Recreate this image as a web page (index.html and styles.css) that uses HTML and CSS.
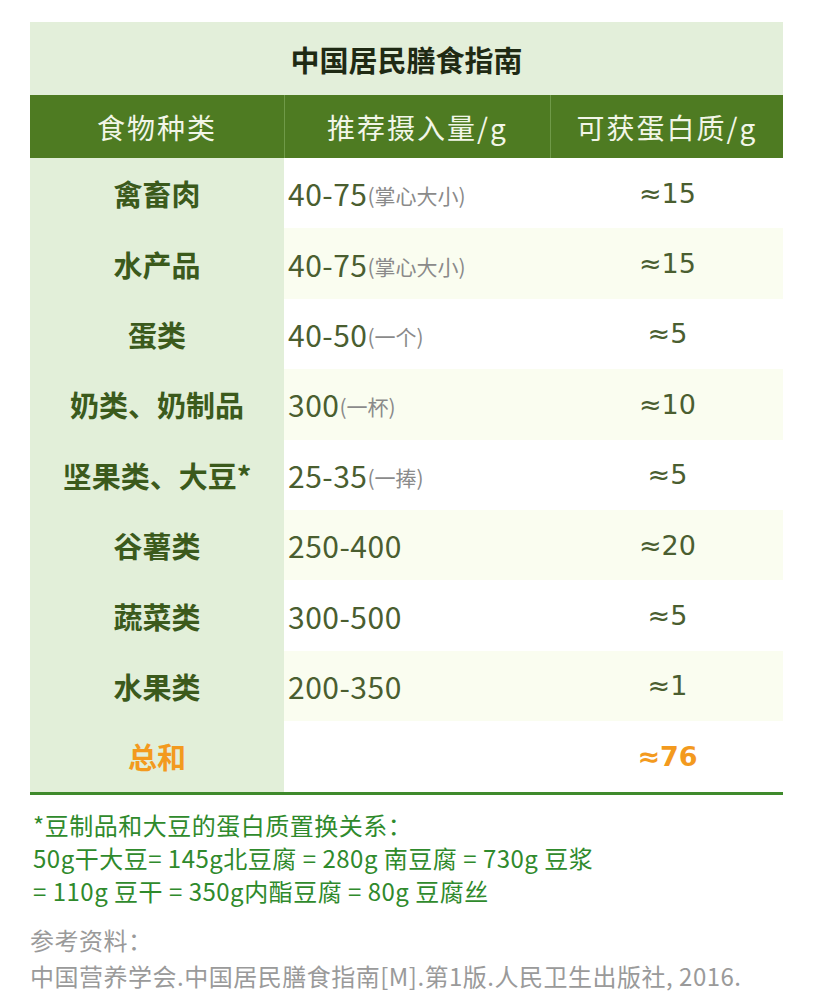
FILE: index.html
```html
<!DOCTYPE html>
<html lang="zh-CN">
<head>
<meta charset="utf-8">
<link rel="stylesheet" href="styles.css">
</head>
<body>
<div class="page">
  <div class="table">
    <div class="title">中国居民膳食指南</div>
    <div class="grid">
      <div class="hd">食物种类</div>
      <div class="hd">推荐摄入量/g</div>
      <div class="hd">可获蛋白质/g</div>

      <div class="c1">禽畜肉</div>
      <div class="c2">40-75<span class="note">(掌心大小)</span></div>
      <div class="c3">≈15</div>

      <div class="c1">水产品</div>
      <div class="c2 alt">40-75<span class="note">(掌心大小)</span></div>
      <div class="c3 alt">≈15</div>

      <div class="c1">蛋类</div>
      <div class="c2">40-50<span class="note">(一个)</span></div>
      <div class="c3">≈5</div>

      <div class="c1">奶类、奶制品</div>
      <div class="c2 alt">300<span class="note">(一杯)</span></div>
      <div class="c3 alt">≈10</div>

      <div class="c1">坚果类、大豆*</div>
      <div class="c2">25-35<span class="note">(一捧)</span></div>
      <div class="c3">≈5</div>

      <div class="c1">谷薯类</div>
      <div class="c2 alt">250-400</div>
      <div class="c3 alt">≈20</div>

      <div class="c1">蔬菜类</div>
      <div class="c2">300-500</div>
      <div class="c3">≈5</div>

      <div class="c1">水果类</div>
      <div class="c2 alt">200-350</div>
      <div class="c3 alt">≈1</div>

      <div class="c1 total">总和</div>
      <div class="c2"></div>
      <div class="c3 total">≈76</div>
    </div>
  </div>
  <div class="foot">
    <p>*豆制品和大豆的蛋白质置换关系：</p>
    <p>50g干大豆= 145g北豆腐 = 280g 南豆腐 = 730g 豆浆</p>
    <p>= 110g 豆干 = 350g内酯豆腐 = 80g 豆腐丝</p>
  </div>
  <div class="ref">
    <p>参考资料：</p>
    <p>中国营养学会.中国居民膳食指南[M].第1版.人民卫生出版社, 2016.</p>
  </div>
</div>
</body>
</html>
```

FILE: styles.css
```css
* { box-sizing: border-box; }
html, body { margin: 0; padding: 0; background: #ffffff; }
body {
  font-family: "Noto Sans CJK SC", "Noto Sans", sans-serif;
  width: 815px;
}
.page { padding: 22px 32px 0 30px; }
.table { width: 753px; }
.title {
  height: 73px;
  background: #e3efda;
  color: #1f2a14;
  font-size: 29px;
  font-weight: 700;
  display: flex;
  align-items: center;
  justify-content: center;
}
.grid {
  display: grid;
  grid-template-columns: 254px 266px 233px;
  grid-template-rows: 63px repeat(9, 70.4px);
  border-bottom: 3px solid #3f8a2c;
}
.hd {
  background: #4e7b22;
  color: #f2f6e8;
  font-size: 28px;
  display: flex;
  align-items: center;
  justify-content: center;
  border-left: 1px solid #6f9a48;
  letter-spacing: 2px;
}
.hd:first-child { border-left: none; }
.c1 {
  background: #e2efd9;
  color: #3b5a1c;
  font-size: 29px;
  font-weight: 700;
  display: flex;
  align-items: center;
  justify-content: center;
}
.c2, .c3 {
  background: #ffffff;
  color: #4a5e30;
  font-size: 30px;
  display: flex;
  align-items: center;
}
.c2 { padding-left: 4px; letter-spacing: 0.5px; }
.c3 {
  justify-content: center;
  font-family: "DejaVu Sans", "Noto Sans CJK SC", sans-serif;
  font-size: 27px;
  padding-left: 2px;
}
.alt { background: #fafdf0; }
.note {
  font-size: 21px;
  color: #8a8a8a;
  letter-spacing: 0;
  margin-top: 4px;
}
.total { color: #f39a1e; font-weight: 700; }
.foot {
  padding: 13px 0 0 3px;
  color: #2f8a2c;
  font-size: 24px;
  letter-spacing: 0.5px;
}
.foot p, .ref p { margin: 0; line-height: 33px; }
.ref {
  padding-top: 15px;
  color: #9a9a9a;
  font-size: 24px;
  letter-spacing: 0.5px;
}
.ref p { line-height: 36px; }
```
